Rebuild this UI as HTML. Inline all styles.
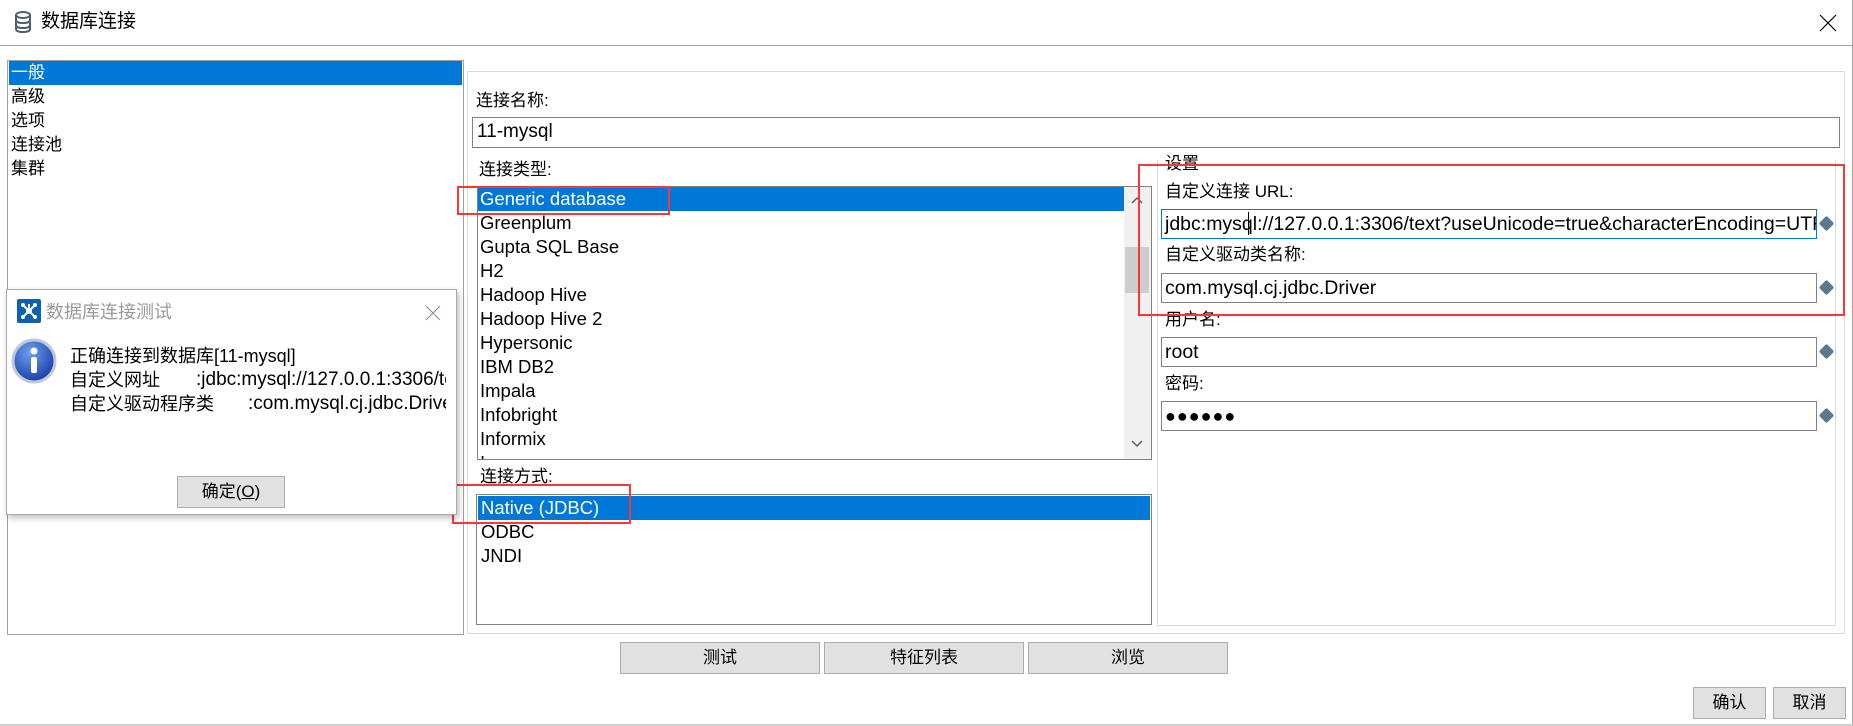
<!DOCTYPE html>
<html><head><meta charset="utf-8">
<style>
*{margin:0;padding:0;box-sizing:border-box}
body{width:1853px;height:726px;background:#fff;position:relative;overflow:hidden;font-family:"Liberation Sans","Noto Sans CJK SC",sans-serif;font-size:17px;color:#000}
.a{position:absolute}
.t{position:absolute;white-space:nowrap;line-height:24px}
.l{font-size:18.5px}
.box{position:absolute;border:1px solid #828282;background:#fff}
.sel{position:absolute;background:#0078d7}
.btn{position:absolute;background:#e1e1e1;border:1px solid #adadad;text-align:center;line-height:30px;font-size:17px}
.red{position:absolute;border:2.5px solid #f23a3a}
.dia{position:absolute;width:11px;height:11px;background:#5a7890;transform:rotate(45deg);border-radius:2px}
</style></head><body>
<svg class="a" style="left:14px;top:11px" width="18" height="22" viewBox="0 0 18 22"><g fill="none" stroke="#4a6070" stroke-width="2"><ellipse cx="9" cy="4" rx="7" ry="3"/><path d="M2 4v14c0 2 3 3 7 3s7-1 7-3V4M2 9c0 2 3 3 7 3s7-1 7-3M2 14c0 2 3 3 7 3s7-1 7-3"/></g></svg>
<div class="t" style="left:41px;top:10px;font-size:19px">数据库连接</div>
<svg class="a" style="left:1819px;top:14px" width="18" height="18"><path d="M1 1L17 17M17 1L1 17" stroke="#000" stroke-width="1.2"/></svg>
<div class="a" style="left:0;top:45px;width:1853px;height:1px;background:#a0a0a0"></div>
<div class="a" style="left:1852px;top:0;width:1px;height:726px;background:#a0a0a0"></div>
<div class="a" style="left:0;top:724px;width:1853px;height:2px;background:#d0d0d0"></div>

<div class="box" style="left:7px;top:60px;width:457px;height:575px;border-color:#a0a0a0"></div>
<div class="sel" style="left:9px;top:61px;width:453px;height:24px"></div>
<div class="t" style="left:11px;top:61px;color:#fff">一般</div>
<div class="t" style="left:11px;top:85px">高级</div>
<div class="t" style="left:11px;top:109px">选项</div>
<div class="t" style="left:11px;top:133px">连接池</div>
<div class="t" style="left:11px;top:157px">集群</div>

<div class="a" style="left:467px;top:71px;width:1378px;height:563px;border:1px solid #d9d9d9"></div>
<div class="t" style="left:476px;top:89px">连接名称:</div>
<div class="box" style="left:472px;top:117px;width:1368px;height:31px"></div>
<div class="t l" style="left:477px;top:120px;font-size:19px">11-mysql</div>
<div class="t" style="left:479px;top:158px">连接类型:</div>

<div class="box" style="left:477px;top:186px;width:675px;height:274px"></div>
<div class="sel" style="left:478px;top:187px;width:646px;height:24px"></div>
<div class="a" style="left:1124px;top:187px;width:27px;height:272px;background:#f0f0f0"></div>
<div class="a" style="left:1125px;top:247px;width:24px;height:46px;background:#cdcdcd"></div>
<svg class="a" style="left:1131px;top:196px" width="12" height="8"><path d="M1 7L6 2L11 7" fill="none" stroke="#606060" stroke-width="1.5"/></svg>
<svg class="a" style="left:1131px;top:440px" width="12" height="8"><path d="M1 1L6 6L11 1" fill="none" stroke="#606060" stroke-width="1.5"/></svg>
<div class="a l" style="left:478px;top:187px;width:646px;height:272px;overflow:hidden">
<div class="t" style="left:2px;top:0;color:#fff">Generic database</div>
<div class="t" style="left:2px;top:24px">Greenplum</div>
<div class="t" style="left:2px;top:48px">Gupta SQL Base</div>
<div class="t" style="left:2px;top:72px">H2</div>
<div class="t" style="left:2px;top:96px">Hadoop Hive</div>
<div class="t" style="left:2px;top:120px">Hadoop Hive 2</div>
<div class="t" style="left:2px;top:144px">Hypersonic</div>
<div class="t" style="left:2px;top:168px">IBM DB2</div>
<div class="t" style="left:2px;top:192px">Impala</div>
<div class="t" style="left:2px;top:216px">Infobright</div>
<div class="t" style="left:2px;top:240px">Informix</div>
<div class="t" style="left:2px;top:264px">Ingres</div>
</div>

<div class="t" style="left:480px;top:465px">连接方式:</div>
<div class="box" style="left:476px;top:494px;width:676px;height:131px"></div>
<div class="sel" style="left:478px;top:496px;width:672px;height:24px"></div>
<div class="t l" style="left:481px;top:496px;color:#fff">Native (JDBC)</div>
<div class="t l" style="left:481px;top:520px">ODBC</div>
<div class="t l" style="left:481px;top:544px">JNDI</div>

<div class="a" style="left:1157px;top:160px;width:679px;height:466px;border:1px solid #d9d9d9;border-top:none"></div>
<div class="t" style="left:1165px;top:152px">设置</div>
<div class="t" style="left:1165px;top:180px">自定义连接 URL:</div>
<div class="box" style="left:1161px;top:209px;width:656px;height:30px;border-color:#0078d7;overflow:hidden">
<div class="t" style="left:3px;top:2px;font-size:19.5px">jdbc:mysql://127.0.0.1:3306/text?useUnicode=true&amp;characterEncoding=UTF-8</div></div>
<div class="a" style="left:1248px;top:212px;width:1px;height:23px;background:#000"></div>
<div class="dia" style="left:1821px;top:218px"></div>
<div class="t" style="left:1165px;top:243px">自定义驱动类名称:</div>
<div class="box" style="left:1161px;top:273px;width:656px;height:30px">
<div class="t" style="left:3px;top:2px;font-size:19.5px">com.mysql.cj.jdbc.Driver</div></div>
<div class="dia" style="left:1821px;top:282px"></div>
<div class="t" style="left:1165px;top:308px">用户名:</div>
<div class="box" style="left:1161px;top:337px;width:656px;height:30px">
<div class="t" style="left:3px;top:2px;font-size:19.5px">root</div></div>
<div class="dia" style="left:1821px;top:346px"></div>
<div class="t" style="left:1165px;top:372px">密码:</div>
<div class="box" style="left:1161px;top:401px;width:656px;height:30px">
<div class="t" style="left:3px;top:2px;font-size:18px;letter-spacing:1px">●●●●●●</div></div>
<div class="dia" style="left:1821px;top:410px"></div>

<div class="btn" style="left:620px;top:642px;width:200px;height:32px">测试</div>
<div class="btn" style="left:824px;top:642px;width:200px;height:32px">特征列表</div>
<div class="btn" style="left:1028px;top:642px;width:200px;height:32px">浏览</div>
<div class="btn" style="left:1693px;top:687px;width:73px;height:32px">确认</div>
<div class="btn" style="left:1773px;top:687px;width:73px;height:32px">取消</div>

<div class="red" style="left:1138px;top:164px;width:707px;height:152px"></div>
<div class="red" style="left:457px;top:186px;width:213px;height:29px"></div>
<div class="red" style="left:452px;top:484px;width:179px;height:40px"></div>

<div class="a" style="left:6px;top:289px;width:451px;height:226px;background:#fff;border:1px solid #a8a8a8;box-shadow:2px 3px 6px rgba(0,0,0,0.25)"></div>
<div class="a" style="left:17px;top:299px;width:24px;height:24px;background:#0a62b0;border-radius:2px"></div>
<svg class="a" style="left:17px;top:299px" width="24" height="24"><g stroke="#fff" stroke-width="2"><path d="M6 6L18 18M18 6L6 18M12 12L12 5"/></g><g fill="#fff"><circle cx="12" cy="12" r="3"/><circle cx="6" cy="6" r="2"/><circle cx="18" cy="6" r="2"/><circle cx="6" cy="18" r="2"/><circle cx="18" cy="18" r="2"/></g></svg>
<div class="t" style="left:46px;top:300px;color:#9a9a9a;font-size:18px">数据库连接测试</div>
<svg class="a" style="left:425px;top:305px" width="16" height="16"><path d="M1 1L15 15M15 1L1 15" stroke="#888" stroke-width="1"/></svg>
<svg class="a" style="left:11px;top:338px" width="46" height="46"><defs><radialGradient id="g" cx="40%" cy="30%" r="70%"><stop offset="0" stop-color="#6d9ff0"/><stop offset="1" stop-color="#1a3fa8"/></radialGradient></defs><circle cx="23" cy="23" r="21" fill="url(#g)" stroke="#c0c8d8" stroke-width="3"/><circle cx="23" cy="13" r="3.5" fill="#fff"/><rect x="20" y="19" width="6" height="16" rx="2" fill="#fff"/></svg>
<div class="a" style="left:70px;top:344px;width:376px;height:80px;overflow:hidden;font-size:18px">
<div class="t" style="left:0;top:0">正确连接到数据库[11-mysql]</div>
<div class="t" style="left:0;top:24px">自定义网址</div>
<div class="t" style="left:126px;top:24px;font-size:19px">:jdbc:mysql://127.0.0.1:3306/text</div>
<div class="t" style="left:0;top:48px">自定义驱动程序类</div>
<div class="t" style="left:178px;top:48px;font-size:19px">:com.mysql.cj.jdbc.Driver</div>
</div>
<div class="btn" style="left:177px;top:476px;width:108px;height:32px">确定(<u>O</u>)</div>
</body></html>
